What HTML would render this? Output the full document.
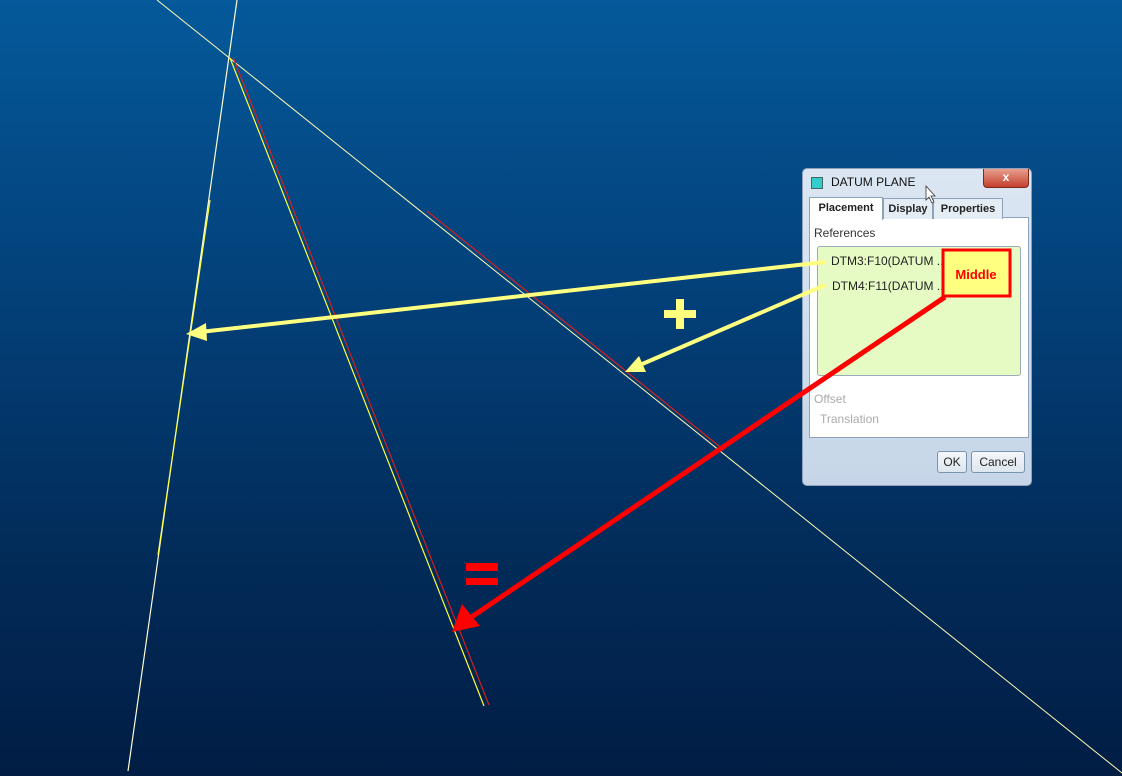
<!DOCTYPE html>
<html><head><meta charset="utf-8"><style>
html,body{margin:0;padding:0}
body{width:1122px;height:776px;overflow:hidden;position:relative;background:linear-gradient(#04599a 0%,#033f77 40%,#022c5a 70%,#011d44 100%);font-family:"Liberation Sans",sans-serif}
svg{position:absolute;left:0;top:0}
.dlg{position:absolute;left:802px;top:168px;width:230px;height:318px;background:linear-gradient(#dbe6f2,#c6d6e8);border:1px solid #8ea3bb;border-radius:5px;box-sizing:border-box}
.title{position:absolute;left:28px;top:6px;font-size:12px;color:#111}
.ico{position:absolute;left:8px;top:8px;width:10px;height:10px;background:#3cc;border:1px solid #466}
.x{position:absolute;left:180px;top:0;width:44px;height:18px;background:linear-gradient(#e8a090,#c4402c);border:1px solid #7a2a20;border-top:none;border-radius:0 0 4px 4px;color:#fff;font-size:12px;font-weight:bold;text-align:center;line-height:17px}
.pane{position:absolute;left:6px;top:48px;width:218px;height:219px;background:#fff;border:1px solid #8ea3bb}
.tab{position:absolute;top:29px;height:20px;font-size:11px;font-weight:bold;color:#222;line-height:20px;text-align:center;border:1px solid #8ea3bb;border-bottom:none;background:#e4ecf4}
.list{position:absolute;left:7px;top:28px;width:202px;height:128px;background:#e6fbc4;border:1px solid #9ab;border-radius:3px}
.btn{position:absolute;top:282px;height:20px;border:1px solid #7a93ad;border-radius:3px;background:linear-gradient(#f4f7fa,#dde6ef);font-size:12px;line-height:20px;text-align:center;color:#222}
</style></head><body>
<svg width="1122" height="776">
<line x1="237" y1="0" x2="128" y2="771" stroke="#fffbd0" stroke-width="1.2"/>
<line x1="210" y1="200" x2="158" y2="555" stroke="#ffff40" stroke-width="1.2"/>
<line x1="157" y1="0" x2="1122" y2="773" stroke="#fffbb0" stroke-width="1"/>
<line x1="425" y1="213" x2="722" y2="452" stroke="#d02020" stroke-width="1.2" transform="translate(2,-2)"/>
<line x1="230" y1="58" x2="486" y2="706" stroke="#d02020" stroke-width="1.2" transform="translate(3,-1)"/>
<line x1="230" y1="58" x2="484" y2="706" stroke="#ffff30" stroke-width="1.2"/>
<rect x="664" y="310" width="32" height="8" fill="#ffff80"/>
<rect x="676" y="299" width="8" height="30" fill="#ffff80"/>
<rect x="466" y="563" width="32" height="8" fill="#f00"/>
<rect x="466" y="578" width="32" height="7" fill="#f00"/>
</svg>
<div class="dlg">
<div class="ico"></div><div class="title">DATUM PLANE</div><div class="x">x</div>
<div class="pane">
<div style="position:absolute;left:4px;top:8px;font-size:12px;color:#333">References</div>
<div class="list">
<div style="position:absolute;left:13px;top:7px;font-size:12px;color:#222">DTM3:F10(DATUM ...</div>
<div style="position:absolute;left:14px;top:32px;font-size:12px;color:#222">DTM4:F11(DATUM ...</div>
</div>
<div style="position:absolute;left:4px;top:174px;font-size:12px;color:#aaa">Offset</div>
<div style="position:absolute;left:10px;top:194px;font-size:12px;color:#aaa">Translation</div>
</div>
<div class="tab" style="left:6px;width:72px;background:#fff;height:22px;top:28px">Placement</div>
<div class="tab" style="left:80px;width:48px">Display</div>
<div class="tab" style="left:130px;width:68px">Properties</div>
<div class="btn" style="left:134px;width:28px">OK</div>
<div class="btn" style="left:168px;width:52px">Cancel</div>
</div>
<svg width="1122" height="776">
<line x1="825" y1="262" x2="200" y2="332" stroke="#ffff80" stroke-width="4"/>
<polygon points="186,334 206,323 207,341" fill="#ffff80"/>
<line x1="825" y1="285" x2="640" y2="365" stroke="#ffff80" stroke-width="4"/>
<polygon points="625,372 639,356 646,372" fill="#ffff80"/>
<line x1="945" y1="297" x2="470" y2="618" stroke="#f00" stroke-width="5"/>
<polygon points="452,632 462,604 480,626" fill="#f00"/>
<rect x="943" y="250" width="67" height="46" fill="#ffff80" stroke="#f00" stroke-width="3"/>
<text x="976" y="279" font-family="Liberation Sans" font-size="13" font-weight="bold" fill="#f00" text-anchor="middle">Middle</text>
<path d="M926 186 L926 200 L929 197 L932 203 L934 202 L931 196 L935 196 Z" fill="#fff" stroke="#333" stroke-width="0.8"/>
</svg>
</body></html>
